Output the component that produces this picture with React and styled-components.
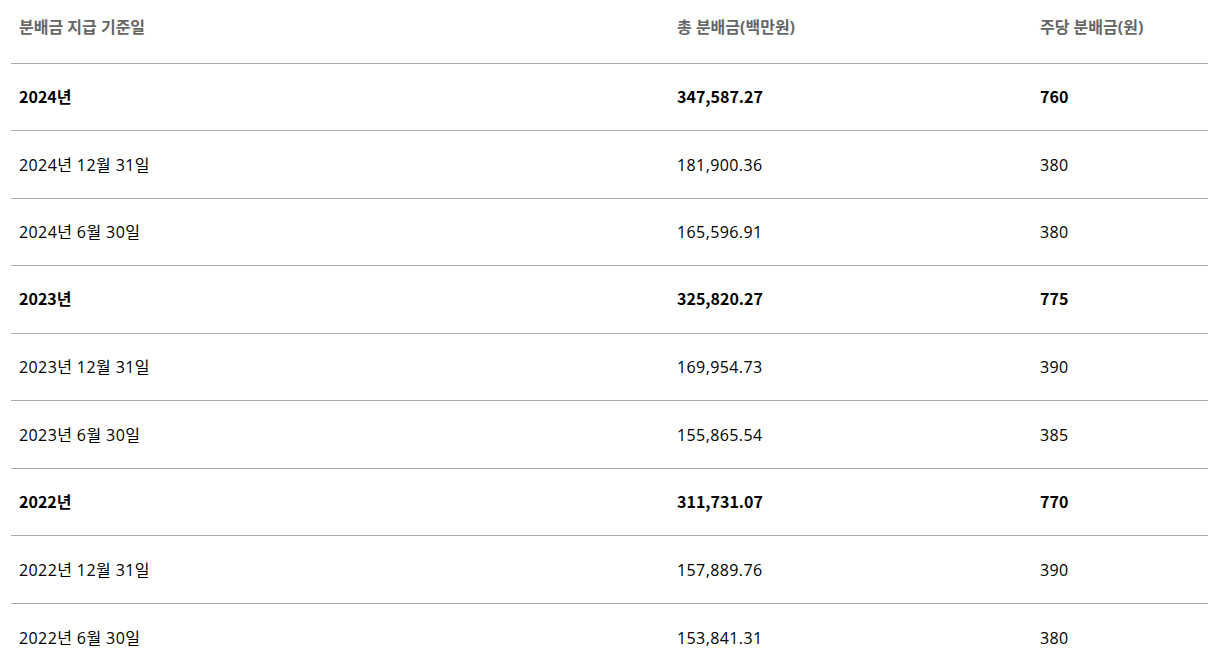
import styled, { createGlobalStyle } from "styled-components";

const GlobalStyle = createGlobalStyle`
  body {
    margin: 0;
    background: #fff;
    font-family: "Open Sans", "Noto Sans CJK KR", sans-serif;
  }
`;

const rows = [
  { date: "2024년", total: "347,587.27", perShare: "760", year: true },
  { date: "2024년 12월 31일", total: "181,900.36", perShare: "380" },
  { date: "2024년 6월 30일", total: "165,596.91", perShare: "380" },
  { date: "2023년", total: "325,820.27", perShare: "775", year: true },
  { date: "2023년 12월 31일", total: "169,954.73", perShare: "390" },
  { date: "2023년 6월 30일", total: "155,865.54", perShare: "385" },
  { date: "2022년", total: "311,731.07", perShare: "770", year: true },
  { date: "2022년 12월 31일", total: "157,889.76", perShare: "390" },
  { date: "2022년 6월 30일", total: "153,841.31", perShare: "380" },
];

const App = () => {
  return (
    <Wrapper>
      <GlobalStyle />
      <Table>
        <colgroup>
          <col style={{ width: 658 }} />
          <col style={{ width: 363 }} />
          <col />
        </colgroup>
        <thead>
          <tr>
            <Th>분배금 지급 기준일</Th>
            <Th>총 분배금(백만원)</Th>
            <Th>주당 분배금(원)</Th>
          </tr>
        </thead>
        <tbody>
          {rows.map((r, i) => (
            <Row key={i}>
              <Td $bold={r.year}>{r.date}</Td>
              <Td $bold={r.year}>{r.total}</Td>
              <Td $bold={r.year}>{r.perShare}</Td>
            </Row>
          ))}
        </tbody>
      </Table>
    </Wrapper>
  );
};

export default App;

const Wrapper = styled.div`
  padding-left: 11px;
`;

const Table = styled.table`
  width: 1197px;
  border-collapse: collapse;
  table-layout: fixed;
`;

const Th = styled.th`
  height: 63px;
  padding: 0 8px 9px;
  box-sizing: border-box;
  text-align: left;
  vertical-align: middle;
  font-size: 16px;
  line-height: 20px;
  font-weight: 700;
  color: #666;
  border-bottom: 1px solid #ababab;
`;

const Row = styled.tr`
  border-bottom: 1px solid #ababab;
  &:last-child {
    border-bottom: none;
  }
`;

const Td = styled.td`
  height: 67.5px;
  padding: ${(p) => (p.$bold ? "0 8px 2px" : "1px 8px 0")};
  box-sizing: border-box;
  vertical-align: middle;
  font-family: ${(p) =>
    p.$bold
      ? `"Noto Sans CJK KR", sans-serif`
      : `"Open Sans", "Noto Sans CJK KR", sans-serif`};
  font-size: 16px;
  line-height: 20px;
  letter-spacing: ${(p) => (p.$bold ? "0" : "0.4px")};
  font-weight: ${(p) => (p.$bold ? 700 : 400)};
  color: #000;
`;
